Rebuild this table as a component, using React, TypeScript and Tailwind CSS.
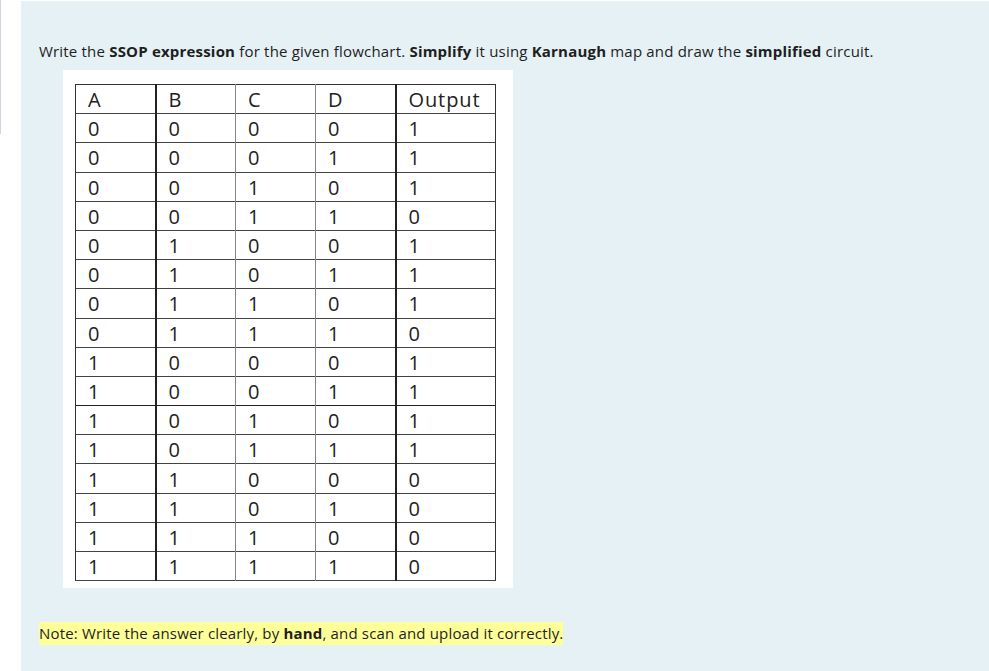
import React from "react";

const rows: string[][] = [
  ["0", "0", "0", "0", "1"],
  ["0", "0", "0", "1", "1"],
  ["0", "0", "1", "0", "1"],
  ["0", "0", "1", "1", "0"],
  ["0", "1", "0", "0", "1"],
  ["0", "1", "0", "1", "1"],
  ["0", "1", "1", "0", "1"],
  ["0", "1", "1", "1", "0"],
  ["1", "0", "0", "0", "1"],
  ["1", "0", "0", "1", "1"],
  ["1", "0", "1", "0", "1"],
  ["1", "0", "1", "1", "1"],
  ["1", "1", "0", "0", "0"],
  ["1", "1", "0", "1", "0"],
  ["1", "1", "1", "0", "0"],
  ["1", "1", "1", "1", "0"],
];

const colCls = [
  "w-[80px] border-l-[1.5px] border-l-[#333] border-r-[2px] border-r-[#222]",
  "w-[80px] border-r border-r-[#888]",
  "w-[80px] border-r border-r-[#888]",
  "w-[80px] border-r-[2px] border-r-[#222]",
  "w-[100px] border-r-[1.5px] border-r-[#333]",
];

export default function App() {
  const header = ["A", "B", "C", "D", "Output"];
  return (
    <div className="relative w-[989px] h-[671px] bg-white flex" style={{ fontFamily: '"Open Sans", "Noto Sans", sans-serif' }}>
      <div className="absolute left-0 top-0 w-px h-[134px] bg-[#cdd6df]" />
      <div className="ml-[21px] mt-px flex-1 bg-[#e5f1f4] pl-[18px] pt-[40px] flex flex-col">
        <p className="text-[15px] leading-[20px] text-[#1e1e1e] tracking-[0.19px]">
          Write the <b>SSOP expression</b> for the given flowchart. <b>Simplify</b> it using <b>Karnaugh</b> map and draw the <b>simplified</b> circuit.
        </p>
        <div className="ml-[24px] mt-[9px] w-[450px] h-[518px] bg-white pt-[14px] pl-[12px]">
          <table className="border-collapse text-[20px] text-[#222] leading-none tracking-[0.9px]" style={{ fontFamily: '"Open Sans", "Noto Sans", sans-serif' }}>
            <tbody>
              {[header, ...rows].map((r, i) => (
                <tr key={i} className={`h-[29.2px] border-b-[1.5px] ${i === 0 ? "border-t-[1.5px] border-t-[#333]" : ""} ${i === 10 ? "border-b-[#222]" : "border-b-[#444]"}`}>
                  {r.map((c, j) => (
                    <td key={j} className={`${colCls[j]} pl-[12px] p-0 pt-[2px] align-middle`}>
                      {c}
                    </td>
                  ))}
                </tr>
              ))}
            </tbody>
          </table>
        </div>
        <div className="mt-[33px]">
          <span className="bg-[#ffff99] text-[15px] leading-[23px] inline-block text-[#1e1e1e] tracking-[0.17px]">
            Note: Write the answer clearly, by <b>hand</b>, and scan and upload it correctly.
          </span>
        </div>
      </div>
    </div>
  );
}
